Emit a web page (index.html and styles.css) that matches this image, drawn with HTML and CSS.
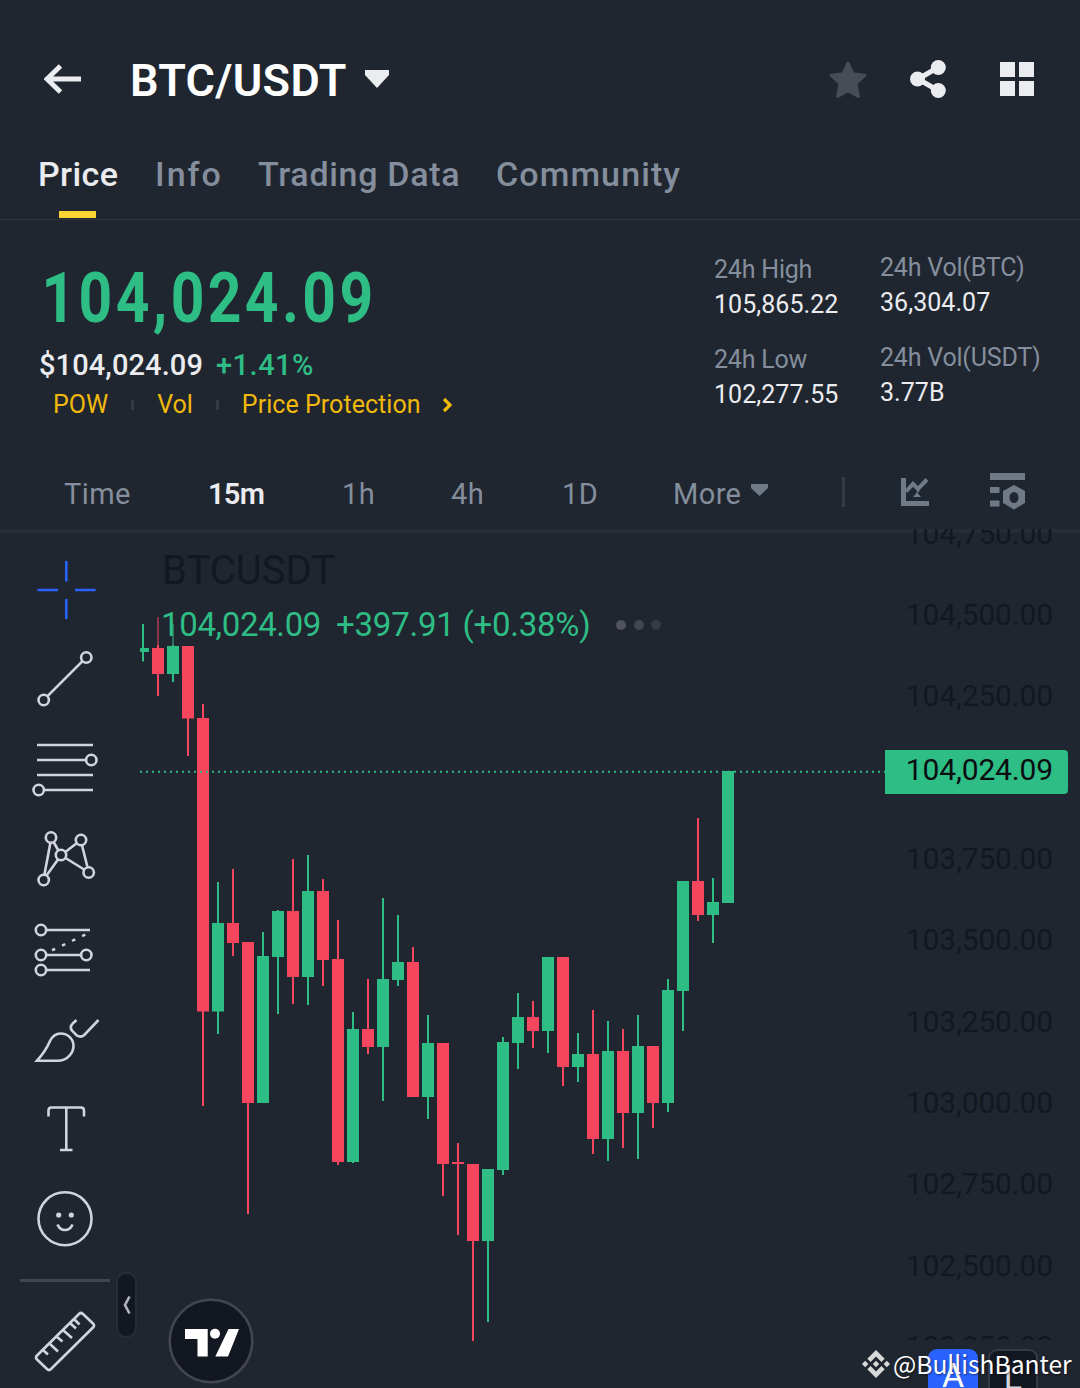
FILE: index.html
```html
<!DOCTYPE html>
<html lang="en">
<head>
    <meta charset="UTF-8">
    <meta name="viewport" content="width=device-width, initial-scale=1.0">
    <title>BTC/USDT</title>
    <link rel="stylesheet" href="styles.css">
</head>
<body>
    <header class="header">
        <svg class="back" width="38" height="30" viewBox="0 0 38 30"><path d="M16.500 2 3 15l13.500 13M3 15h34" fill="none" stroke="#eaecef" stroke-width="5"/></svg>
        <h1 class="pair">BTC/USDT</h1>
        <svg class="pair-caret" width="24" height="18" viewBox="0 0 24 18"><path d="M0 0h24v5L12 18 0 5z" fill="#eaecef"/></svg>
        <div class="actions">
            <svg class="star" width="38" height="38" viewBox="0 0 38 38"><path d="m19 2 4.900 10.800 12 1.400-8.800 8.200 2.300 13L19 29.800 8.600 35.400l2.300-13-8.800-8.200 12-1.400z" fill="#474d57" stroke="#474d57" stroke-width="3" stroke-linejoin="round"/></svg>
            <svg width="36" height="38" viewBox="0 0 36 38"><path d="M28 7.500 8 19l20 11.500" fill="none" stroke="#eaecef" stroke-width="5"/><g fill="#eaecef"><circle cx="28.300" cy="7.500" r="7.500"/><circle cx="7.500" cy="19" r="7.500"/><circle cx="28.300" cy="30.500" r="7.500"/></g></svg>
            <svg width="34" height="34" viewBox="0 0 34 34"><path d="M0 0h15v15H0zM19 0h15v15H19zM0 19h15v15H0zM19 19h15v15H19z" fill="#eaecef"/></svg>
        </div>
    </header>

    <nav class="tabs">
        <a class="tab active">Price</a>
        <a class="tab tab-info">Info</a>
        <a class="tab">Trading Data</a>
        <a class="tab tab-community">Community</a>
    </nav>

    <section class="ticker">
        <div class="quote">
            <div class="last-price">104,024.09</div>
            <div class="fiat"><span class="usd">$104,024.09</span><span class="change">+1.41%</span></div>
            <div class="tags">
                <span>POW</span><i></i><span>Vol</span><i></i><span class="protection">Price Protection</span>
                <svg width="11" height="16" viewBox="0 0 11 16"><path d="m2 2 6 6-6 6" fill="none" stroke="#f0b90b" stroke-width="3.200"/></svg>
            </div>
        </div>
        <dl class="stats">
            <div><dt>24h High</dt><dd>105,865.22</dd></div>
            <div><dt>24h Low</dt><dd>102,277.55</dd></div>
        </dl>
        <dl class="stats stats-vol">
            <div><dt>24h Vol(BTC)</dt><dd>36,304.07</dd></div>
            <div><dt>24h Vol(USDT)</dt><dd>3.77B</dd></div>
        </dl>
    </section>

    <div class="intervals">
        <span>Time</span>
        <span class="active">15m</span>
        <span>1h</span>
        <span>4h</span>
        <span>1D</span>
        <span class="more">More <svg width="17" height="12" viewBox="0 0 17 12"><path d="M0 0h17v4l-8.500 8L0 4z" fill="#707a87"/></svg></span>
        <i class="divider"></i>
        <svg width="28" height="29" viewBox="0 0 28 29"><path d="M2.500 1v25.500H28" fill="none" stroke="#707a87" stroke-width="5"/><path d="m5 14.500 7-7.500 5 5 9-9.500" fill="none" stroke="#707a87" stroke-width="4"/><path d="m16.500 12 2 2-2 2 3.500 4h-8l3.500-4z" fill="#707a87"/></svg>
        <svg width="35" height="37" viewBox="0 0 35 37"><path d="M0 0h35v7H0zM0 14h9.500v6H0zM0 27.500h9.500v6H0z" fill="#707a87"/><path fill-rule="evenodd" d="m24 12 11 6v12l-11 6.500L13 30V18zm0 7a4.500 5.500 0 0 0 0 11 4.500 5.500 0 0 0 0-11z" fill="#707a87"/></svg>
    </div>

    <main class="chart">
        <div class="toolbar">
            <svg viewBox="0 0 90 90"><path class="cross" d="M46.300 17v20.500M46.300 55v20M17.500 46H38M55 46h20.500"/></svg>
            <svg viewBox="0 0 90 90"><path d="m27.500 62.200 35-35"/><circle cx="66.300" cy="23.500" r="5.200"/><circle cx="23.700" cy="66" r="5.200"/></svg>
            <svg viewBox="0 0 90 90"><path d="M17 21h56M17 36h49M17 51h56M24 66h49"/><circle cx="71.300" cy="36" r="5.200"/><circle cx="18.700" cy="66" r="5.200"/></svg>
            <svg viewBox="0 0 90 90"><path d="m30.400 28.700-6 32M33.600 28l4.800 8.500M45.300 38 57 29M62 31.200l5.500 22M45.500 44l18.600 11.500M38 45.400 26.500 61.500"/><circle cx="31" cy="23.500" r="5.200"/><circle cx="61" cy="26" r="5.200"/><circle cx="41" cy="41" r="5.200"/><circle cx="23.700" cy="66" r="5.200"/><circle cx="68.700" cy="58.500" r="5.200"/></svg>
            <svg viewBox="0 0 90 90"><path d="M26.500 26H70M26.500 51H61M26.500 66H70"/><path d="m32 46.300 34-16" stroke-dasharray="3.500 7.600"/><circle cx="21" cy="26" r="5.200"/><circle cx="21" cy="51" r="5.200"/><circle cx="66.300" cy="51" r="5.200"/><circle cx="21" cy="66" r="5.200"/></svg>
            <svg viewBox="0 0 90 90"><path d="M17 66.700C24 59 27 54 30 47c3-6 6-7.500 10.500-7.500C48 39.500 53.500 45 53.500 52S47 66.700 39 66.700zM56.500 26l-3.500 3.200c-3 3-2.500 6-.5 8l4.500 4.500q4 2 7-.5L78.500 26"/></svg>
            <svg viewBox="0 0 90 90"><path d="M28.500 32.500v-6q0-3 3-3h29.500q3 0 3 3v6M46.300 23.500V66M40 66h12.500"/></svg>
            <svg viewBox="0 0 90 90"><circle cx="45" cy="44.700" r="26.500"/><path d="M37.500 50.500c3 7.300 12 7.300 15 0"/><g class="eyes"><circle cx="38.700" cy="41" r="2.600"/><circle cx="51.300" cy="41" r="2.600"/></g></svg>
            <hr>
            <svg viewBox="0 0 90 90"><path d="M59 18q2-2 4 0l10 9.500q2 2 0 4L31 73q-2 2-4 0L17 63.500q-2-2 0-4zM23.500 54.500l4.500 4M30 48l8 7.500M37 41l5.500 4.500M43.500 34.500l8.500 7.500M50.500 27.500l5.500 5M54.500 23.500l5 5"/></svg>
        </div>

        <!-- filled in by script.js -->
        <svg class="candles" id="candles" width="745" height="859" viewBox="140 529 745 859"></svg>

        <div class="axis">
            <span>104,750.00</span>
            <span>104,500.00</span>
            <span>104,250.00</span>
            <span></span>
            <span>103,750.00</span>
            <span>103,500.00</span>
            <span>103,250.00</span>
            <span>103,000.00</span>
            <span>102,750.00</span>
            <span>102,500.00</span>
            <span>102,250.00</span>
        </div>

        <div class="legend">
            <div class="symbol">BTCUSDT</div>
            <div class="values"><span>104,024.09</span><span class="delta">+397.91 (+0.38%)</span><i></i><i></i><i></i></div>
        </div>
        <div class="price-tag">104,024.09</div>

        <div class="collapse"><svg width="8" height="20" viewBox="0 0 8 20"><path d="m6.500 1.500-4.500 8.500 4.500 8.500" fill="none" stroke="#b2b5be" stroke-width="2.600"/></svg></div>

        <svg class="tv-logo" width="86" height="86" viewBox="0 0 86 86"><circle cx="43" cy="43" r="41.300" fill="#131722" stroke="#434651" stroke-width="2.600"/><path d="M17 31h22.700v27.500H29.500V41H17zM60.500 31H71L60 58.500H47.300z" fill="#fff"/><circle cx="47" cy="35.700" r="5" fill="#fff"/></svg>

        <div class="scale-btn scale-auto">A</div>
        <div class="scale-btn scale-log">L</div>

        <div class="watermark">
            <svg width="28" height="28" viewBox="0 0 28 28" fill="#d9d9d9"><path d="m14 0 8.700 8.700-3.300 3.200L14 6.500l-5.400 5.400-3.300-3.200zM14 28l-8.700-8.700 3.300-3.200 5.400 5.400 5.400-5.400 3.300 3.200zM3.200 10.800 6.400 14l-3.200 3.200L0 14zM24.800 10.800 28 14l-3.200 3.200-3.200-3.200zM14 10.800l3.200 3.200-3.200 3.200-3.200-3.200z"/></svg>
            <span>@BullishBanter</span>
        </div>
    </main>
    <script src="script.js"></script>
</body>
</html>
```
FILE: styles.css
```css
body {
    margin: 0;
    width: 1080px;
    height: 1388px;
    overflow: hidden;
    background-color: #202630;
    font-family: Roboto, "Liberation Sans", sans-serif;
    color: #eaecef;
}

svg {
    display: block;
    flex-shrink: 0;
}

/* Header */
.header {
    display: flex;
    align-items: center;
    height: 160px;
    padding: 0 46px 0 44px;
    box-sizing: border-box;
}

.pair {
    margin: 2px 0 0 48px;
    width: 235px;
    font-size: 45px;
    font-weight: 600;
    letter-spacing: 0.3px;
    line-height: 50px;
    white-space: nowrap;
    color: #ffffff;
}

.back,
.pair-caret {
    margin-bottom: 2px;
}

.actions {
    display: flex;
    align-items: center;
    margin-left: auto;
    margin-bottom: 2px;
}

.actions .star {
    margin: 2px 43px 0 0;
}

.actions svg:nth-child(2) {
    margin-right: 54px;
}

/* Tabs */
.tabs {
    display: grid;
    grid-template-columns: 117px 103px 238px auto;
    height: 60px;
    padding-left: 38px;
    box-sizing: border-box;
    border-bottom: 1px solid #2d343e;
}

.tab {
    position: relative;
    font-size: 34px;
    font-weight: 500;
    letter-spacing: 0.7px;
    line-height: 28px;
    white-space: nowrap;
    color: #848e9c;
}

.tab.active {
    letter-spacing: 0.4px;
    color: #eaecef;
}

.tab-info {
    letter-spacing: 2px;
}

.tab-community {
    letter-spacing: 1.1px;
}

.tab.active::after {
    content: "";
    position: absolute;
    left: 21px;
    bottom: 1px;
    width: 37px;
    height: 7px;
    background-color: #fcd535;
}

/* Ticker */
.ticker {
    display: flex;
    height: 237px;
}

.quote {
    width: 714px;
    padding: 41px 0 0 39px;
    box-sizing: border-box;
}

.last-price {
    height: 75px;
    padding-left: 3px;
    font-size: 70px;
    font-weight: 700;
    letter-spacing: 4px;
    line-height: 75px;
    white-space: nowrap;
    transform: scaleX(0.84);
    transform-origin: 0 0;
    color: #2ebd85;
}

.fiat {
    display: flex;
    height: 60px;
    margin-top: -1px;
    font-size: 29px;
    font-weight: 500;
    line-height: 60px;
}

.usd {
    width: 177px;
    letter-spacing: 0.1px;
}

.change {
    letter-spacing: 0.5px;
    color: #2ebd85;
}

.tags {
    display: flex;
    align-items: center;
    margin-top: -4px;
    padding-left: 14px;
    font-size: 25px;
    line-height: 28px;
    color: #f0b90b;
}

.tags i {
    width: 3px;
    height: 10px;
    margin: 0 23px;
    background-color: #333b47;
}

.tags svg {
    margin-left: 21px;
}

.protection {
    letter-spacing: 0.05px;
}

.stats {
    width: 166px;
    margin: 0;
    padding-top: 35px;
    font-size: 25px;
}

.stats-vol {
    padding-top: 33px;
}

.stats div {
    height: 90px;
}

.stats dt {
    line-height: 30px;
    letter-spacing: -0.2px;
    white-space: nowrap;
    color: #848e9c;
}

.stats dd {
    margin: 5px 0 0;
    line-height: 30px;
    letter-spacing: 0.05px;
}

/* Intervals */
.intervals {
    display: grid;
    grid-template-columns: 144px 134px 109px 111px 111px 169px 59px 89px auto;
    align-items: center;
    height: 72px;
    padding-left: 64px;
    font-size: 29px;
    line-height: 34px;
    letter-spacing: 0.4px;
    color: #848e9c;
}

.intervals span {
    padding-top: 1px;
}

.intervals .active {
    font-weight: 600;
    letter-spacing: -0.7px;
    color: #eaecef;
}

.intervals > svg {
    margin-bottom: 3px;
}

.more {
    display: flex;
    align-items: center;
    gap: 10px;
}

.more svg {
    margin-bottom: 7px;
}

.divider {
    width: 3px;
    height: 30px;
    margin-bottom: 2px;
    background-color: #333b47;
}

/* Chart */
.chart {
    position: relative;
    display: flex;
    height: 859px;
    overflow: hidden;
    box-shadow: inset 0 4px #272d37;
}

.toolbar {
    width: 140px;
    padding: 15px 0 0 20px;
    box-sizing: border-box;
}

.toolbar svg {
    width: 90px;
    height: 90px;
    fill: none;
    stroke: #d1d4dc;
    stroke-width: 2.6;
}

.toolbar .cross {
    stroke: #2962ff;
}

.toolbar .eyes {
    fill: #d1d4dc;
    stroke: none;
}

.toolbar hr {
    width: 90px;
    height: 3px;
    margin: 15px 0 14px;
    border: 0;
    background-color: #434651;
}

.up {
    fill: #2ebd85;
}

.down {
    fill: #f6465d;
}

.last-line {
    stroke: #2ebd85;
    stroke-width: 2;
    stroke-dasharray: 2 4;
}

.axis {
    width: 168px;
    height: 811px;
    overflow: hidden;
    font-size: 30px;
    letter-spacing: -0.15px;
    text-align: right;
    color: #131722;
}

.axis span {
    display: block;
    height: 81.35px;
    line-height: 81.35px;
}

.axis span:first-child {
    margin-top: -36.4px;
}

.legend {
    position: absolute;
    left: 155px;
    top: 19px;
}

.symbol {
    padding-left: 7px;
    font-size: 40px;
    line-height: 46px;
    color: #131722;
}

.values {
    display: flex;
    align-items: center;
    height: 42px;
    margin-top: 9px;
    padding-left: 6px;
    font-size: 33px;
    letter-spacing: -0.35px;
    background-color: rgba(32, 38, 48, 0.5);
    color: #2ebd85;
}

.delta {
    margin: 0 26px 0 15px;
    letter-spacing: -0.25px;
}

.values i {
    width: 10px;
    height: 10px;
    margin: 2px 7.5px 0 0;
    border-radius: 50%;
    background-color: #50535e;
}

.values i:nth-of-type(2) {
    background-color: #434651;
}

.values i:nth-of-type(3) {
    background-color: #363a45;
}

.price-tag {
    position: absolute;
    left: 885px;
    top: 221px;
    width: 183px;
    height: 44px;
    padding-right: 15px;
    box-sizing: border-box;
    border-radius: 0 4px 4px 0;
    background-color: #2ebd85;
    font-size: 30px;
    letter-spacing: -0.15px;
    line-height: 39px;
    text-align: right;
    color: #0b0e11;
}

.collapse {
    position: absolute;
    left: 116px;
    top: 743px;
    display: flex;
    align-items: center;
    justify-content: center;
    width: 21px;
    height: 66px;
    box-sizing: border-box;
    border: 2px solid #272c37;
    border-radius: 10px;
    background-color: #131722;
}

.tv-logo {
    position: absolute;
    left: 168px;
    top: 769px;
}

.scale-btn {
    position: absolute;
    top: 820px;
    width: 50px;
    height: 56px;
    box-sizing: border-box;
    border-radius: 9px;
    font-size: 34px;
    line-height: 52px;
    text-align: center;
}

.scale-auto {
    left: 928px;
    background-color: #2962ff;
    color: #ffffff;
}

.scale-log {
    left: 988px;
    border: 2px solid #363a45;
    background-color: #131722;
    color: #d1d4dc;
}

.watermark {
    position: absolute;
    left: 862px;
    top: 820px;
    display: flex;
    align-items: center;
    gap: 3px;
    height: 30px;
    font-family: "Noto Sans CJK SC", "Noto Sans", sans-serif;
    font-size: 24.6px;
    line-height: 28px;
    color: #ffffff;
    text-shadow: 1px 1px 2px rgba(0, 0, 0, 0.5);
}

.watermark span {
    margin-top: -2px;
}
```
FILE: script.js
```js
// [body top, body bottom, high, low, direction]
const candles = [
    [648, 652, 624, 661.5, 'up'],
    [648, 674, 617, 696, 'down'],
    [646, 674, 624, 682, 'up'],
    [646, 718.5, 646, 756, 'down'],
    [718, 1011.5, 704, 1106, 'down'],
    [923, 1011.5, 882, 1034, 'up'],
    [923, 943, 869, 956, 'down'],
    [942, 1103, 942, 1214, 'down'],
    [956, 1103, 932, 1103, 'up'],
    [911, 957, 910, 1014, 'up'],
    [911, 977, 859, 1004, 'down'],
    [891, 977, 855, 1005, 'up'],
    [891, 960, 879, 986, 'down'],
    [959, 1162, 920, 1165, 'down'],
    [1029, 1162, 1012, 1163, 'up'],
    [1029, 1047, 979, 1054, 'down'],
    [979, 1047, 898, 1101, 'up'],
    [962, 980, 915, 986, 'up'],
    [962, 1097, 947, 1097, 'down'],
    [1043, 1097, 1015, 1119, 'up'],
    [1043, 1164, 1043, 1196, 'down'],
    [1162, 1164, 1143, 1235, 'down'],
    [1164, 1241, 1164, 1341, 'down'],
    [1169, 1241, 1169, 1322, 'up'],
    [1042, 1170, 1037, 1175, 'up'],
    [1017, 1043, 993, 1069, 'up'],
    [1017, 1031, 1001, 1048, 'down'],
    [957, 1031, 957, 1053, 'up'],
    [957, 1067, 957, 1086, 'down'],
    [1054, 1067, 1033, 1082, 'up'],
    [1054, 1139, 1010, 1154, 'down'],
    [1051, 1139, 1021, 1161, 'up'],
    [1051, 1113, 1029, 1148, 'down'],
    [1046, 1113, 1015, 1159, 'up'],
    [1046, 1103, 1046, 1128, 'down'],
    [990, 1103, 979, 1112, 'up'],
    [881, 991, 881, 1031, 'up'],
    [881, 915, 818, 921, 'down'],
    [902, 915, 878, 943, 'up'],
    [771, 903, 771, 903, 'up']
];

const svg = document.getElementById('candles');

function add(tag, attrs) {
    const el = document.createElementNS('http://www.w3.org/2000/svg', tag);
    for (const key in attrs) {
        el.setAttribute(key, attrs[key]);
    }
    svg.appendChild(el);
}

candles.forEach(function(c, i) {
    const x = 143 + i * 15;
    add('rect', { class: c[4], x: x - 1, y: c[2], width: 2, height: c[3] - c[2] });
    add('rect', { class: c[4], x: x - 6, y: c[0], width: 12, height: c[1] - c[0] });
});

// last price
add('line', { class: 'last-line', x1: 140, y1: 771.7, x2: 885, y2: 771.7 });
```
